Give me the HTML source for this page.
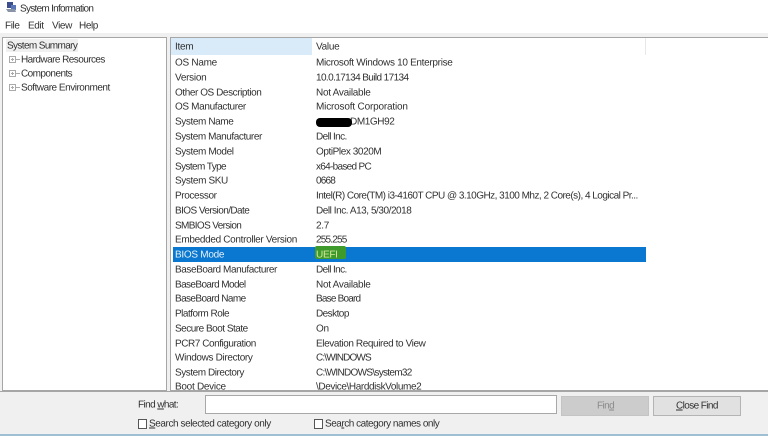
<!DOCTYPE html>
<html><head><meta charset="utf-8"><style>
html,body{margin:0;padding:0;width:768px;height:436px;overflow:hidden;background:#fff}
body{position:relative;font-family:"Liberation Sans",sans-serif;font-size:10px;color:#303030;filter:blur(.35px);text-rendering:geometricPrecision}
div{position:absolute;box-sizing:border-box}
.t{white-space:nowrap;line-height:14px;height:14px;letter-spacing:-.28px;transform:translateY(.5px)}
.a{left:175px}.b{left:316px}
u{text-decoration:underline}
</style></head><body>
<svg style="position:absolute;left:6px;top:2px" width="11" height="11" viewBox="0 0 11 11"><rect x="1" y="0" width="6" height="6" fill="#3c4f8c"/><rect x="5" y="3" width="5" height="5" fill="#5a78b8"/><path d="M0 7L9 7L10 10L2 10Z" fill="#8a94a8"/></svg>
<div class="t" style="left:20px;top:2px;letter-spacing:-.72px">System Information</div>
<div class="t" style="left:5px;top:19px;letter-spacing:-.4px">File</div>
<div class="t" style="left:28px;top:19px;letter-spacing:-.4px">Edit</div>
<div class="t" style="left:52px;top:19px;letter-spacing:-.4px">View</div>
<div class="t" style="left:79px;top:19px;letter-spacing:-.4px">Help</div>

<div style="left:0;top:33px;width:768px;height:403px;background:#f0f0f0"></div>
<div style="left:2px;top:37px;width:165px;height:354px;background:#fff;border:1px solid #a6a6a6"></div>
<div style="left:170px;top:37px;width:598px;height:354px;background:#fff;border:1px solid #a6a6a6;border-right:0"></div>

<div style="left:6px;top:39px;width:72px;height:13px;background:#f0f0f0"></div>
<div class="t" style="left:7px;top:38.5px;letter-spacing:-.62px">System Summary</div>
<svg style="position:absolute;left:9px;top:54px" width="12" height="42" viewBox="0 0 12 42" fill="none" stroke="#aaa" stroke-width="1"><rect x=".5" y="2.5" width="6" height="6" fill="#fff"/><path d="M2 5.5h3M3.5 4v3M7 5.5h4"/><rect x=".5" y="16.5" width="6" height="6" fill="#fff"/><path d="M2 19.5h3M3.5 18v3M7 19.5h4"/><rect x=".5" y="30.5" width="6" height="6" fill="#fff"/><path d="M2 33.5h3M3.5 32v3M7 33.5h4"/></svg>
<div class="t" style="left:21px;top:52.5px;letter-spacing:-.56px">Hardware Resources</div>
<div class="t" style="left:21px;top:66.5px;letter-spacing:-.56px">Components</div>
<div class="t" style="left:21px;top:80.5px;letter-spacing:-.48px">Software Environment</div>

<div style="left:171px;top:38px;width:141px;height:17px;background:#d9ebf9"></div>
<div style="left:645px;top:38px;width:1px;height:17px;background:#e8e8e8"></div>
<div style="left:173px;top:247px;width:473px;height:15px;background:#0a78d0"></div>
<div style="left:315px;top:246px;width:31px;height:13px;background:#3f9a2c;border-radius:2px"></div>

<div class="t a" style="top:40px">Item</div><div class="t b" style="top:40px">Value</div>
<div class="t a" style="top:56px">OS Name</div><div class="t b" style="top:56px;letter-spacing:-.31px">Microsoft Windows 10 Enterprise</div>
<div class="t a" style="top:70.5px">Version</div><div class="t b" style="top:70.5px;letter-spacing:-.6px">10.0.17134 Build 17134</div>
<div class="t a" style="top:85.5px;letter-spacing:-.43px">Other OS Description</div><div class="t b" style="top:85.5px">Not Available</div>
<div class="t a" style="top:100px;letter-spacing:-.35px">OS Manufacturer</div><div class="t b" style="top:100px;letter-spacing:-.18px">Microsoft Corporation</div>
<div class="t a" style="top:115px;letter-spacing:-.4px">System Name</div><div class="t b" style="top:115px;left:350px;letter-spacing:-.4px">DM1GH92</div>
<div style="left:316px;top:118px;width:36px;height:9px;background:#000;border-radius:4px"></div>
<div class="t a" style="top:130px;letter-spacing:-.43px">System Manufacturer</div><div class="t b" style="top:130px;letter-spacing:-.6px">Dell Inc.</div>
<div class="t a" style="top:144.5px;letter-spacing:-.4px">System Model</div><div class="t b" style="top:144.5px;letter-spacing:-.42px">OptiPlex 3020M</div>
<div class="t a" style="top:159.5px;letter-spacing:-.6px">System Type</div><div class="t b" style="top:159.5px;letter-spacing:-.7px">x64-based PC</div>
<div class="t a" style="top:174px;letter-spacing:-.38px">System SKU</div><div class="t b" style="top:174px;letter-spacing:-.8px">0668</div>
<div class="t a" style="top:189px;letter-spacing:-.38px">Processor</div><div class="t b" style="top:189px;letter-spacing:-.52px">Intel(R) Core(TM) i3-4160T CPU @ 3.10GHz, 3100 Mhz, 2 Core(s), 4 Logical Pr...</div>
<div class="t a" style="top:203.5px;letter-spacing:-.57px">BIOS Version/Date</div><div class="t b" style="top:203.5px;letter-spacing:-.45px">Dell Inc. A13, 5/30/2018</div>
<div class="t a" style="top:218.5px;letter-spacing:-.63px">SMBIOS Version</div><div class="t b" style="top:218.5px">2.7</div>
<div class="t a" style="top:233px;letter-spacing:-.32px">Embedded Controller Version</div><div class="t b" style="top:233px;letter-spacing:-.8px">255.255</div>
<div class="t a" style="top:248px;color:#e8f2fa">BIOS Mode</div><div class="t b" style="top:248px;color:#d8e8a0">UEFI</div>
<div class="t a" style="top:262.5px;letter-spacing:-.42px">BaseBoard Manufacturer</div><div class="t b" style="top:262.5px;letter-spacing:-.6px">Dell Inc.</div>
<div class="t a" style="top:277.5px;letter-spacing:-.6px">BaseBoard Model</div><div class="t b" style="top:277.5px">Not Available</div>
<div class="t a" style="top:292px;letter-spacing:-.6px">BaseBoard Name</div><div class="t b" style="top:292px;letter-spacing:-.8px">Base Board</div>
<div class="t a" style="top:307px;letter-spacing:-.5px">Platform Role</div><div class="t b" style="top:307px;letter-spacing:-.55px">Desktop</div>
<div class="t a" style="top:321.5px;letter-spacing:-.5px">Secure Boot State</div><div class="t b" style="top:321.5px">On</div>
<div class="t a" style="top:336.5px;letter-spacing:-.45px">PCR7 Configuration</div><div class="t b" style="top:336.5px;letter-spacing:-.4px">Elevation Required to View</div>
<div class="t a" style="top:351px;letter-spacing:-.34px">Windows Directory</div><div class="t b" style="top:351px;letter-spacing:-.85px">C:\WINDOWS</div>
<div class="t a" style="top:366px;letter-spacing:-.45px">System Directory</div><div class="t b" style="top:366px;letter-spacing:-.7px">C:\WINDOWS\system32</div>
<div style="left:171px;top:381px;width:597px;height:10px;overflow:hidden">
<div class="t" style="left:4px;top:-1px">Boot Device</div><div class="t" style="left:145px;top:-1px;letter-spacing:-.4px">\Device\HarddiskVolume2</div></div>

<div style="left:0;top:391px;width:768px;height:1px;background:#a6a6a6"></div>
<div class="t" style="left:138px;top:398px;letter-spacing:-.6px">Find <u>w</u>hat:</div>
<div style="left:205px;top:395px;width:352px;height:19px;background:#fff;border:1px solid #a8a8a8"></div>
<div style="left:561px;top:396px;width:88px;height:20px;background:#cccccc;border:1px solid #c4c4c4"></div>
<div class="t" style="left:597px;top:399px;color:#8a8a8a;letter-spacing:-.6px">Fin<u>d</u></div>
<div style="left:653px;top:396px;width:88px;height:20px;background:#e1e1e1;border:1px solid #b4b4b4"></div>
<div class="t" style="left:676px;top:399px;letter-spacing:-.6px"><u>C</u>lose Find</div>
<div style="left:138px;top:419px;width:9px;height:10px;background:#fff;border:1px solid #555"></div>
<div class="t" style="left:149px;top:417px;letter-spacing:-.42px"><u>S</u>earch selected category only</div>
<div style="left:314px;top:419px;width:9px;height:10px;background:#fff;border:1px solid #555"></div>
<div class="t" style="left:325px;top:417px;letter-spacing:-.48px">Sea<u>r</u>ch category names only</div>
<div style="left:0;top:434px;width:768px;height:2px;background:#9fc0d4"></div>
</body></html>
